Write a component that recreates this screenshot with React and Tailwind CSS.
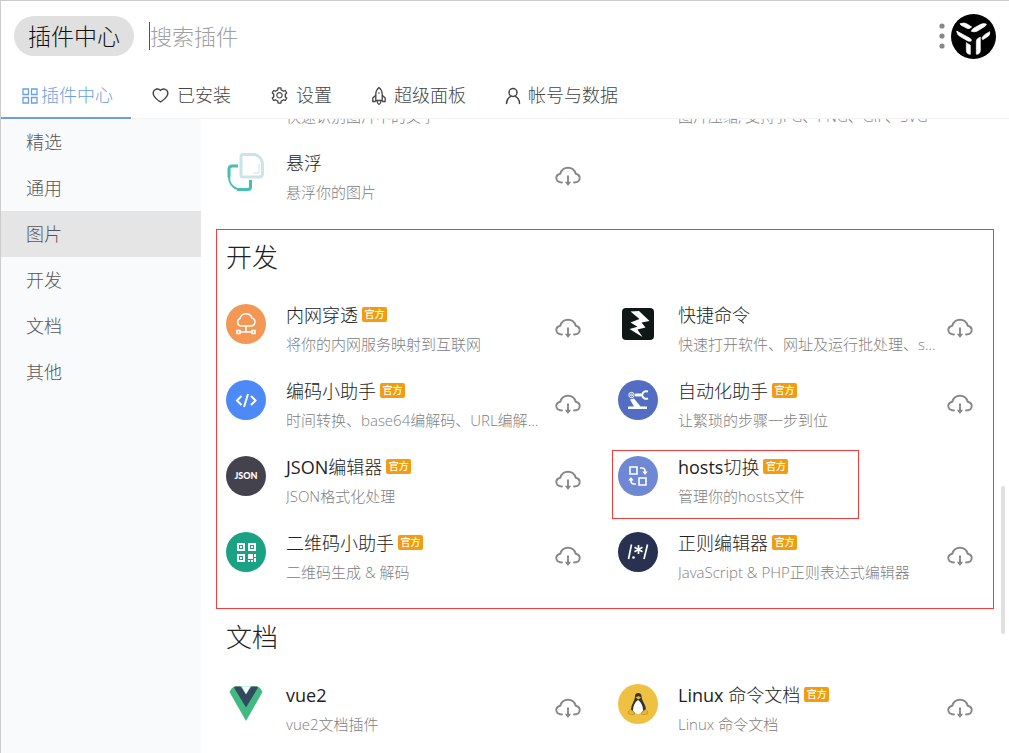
import { AiOutlineHeart, AiOutlineSetting } from 'react-icons/ai';

const GridIcon = () => (
    <svg width="16" height="16" viewBox="0 0 16 16" fill="none" stroke="currentColor" strokeWidth="1.3">
        <path d="M1 1h5.500v5.500H1zM9.500 1H15v5.500H9.500zM1 9.500h5.500V15H1zM9.500 9.500H15V15H9.500z" />
    </svg>
);

const RocketIcon = () => (
    <svg width="16" height="20" viewBox="0 0 16 20" fill="none" stroke="currentColor" strokeWidth="1.3">
        <path d="M8 1.500C5.500 3.500 4.800 5.500 4.800 8v6.500h6.400V8c0-2.500-.7-4.500-3.200-6.500z" strokeLinejoin="round" />
        <path d="M4.800 9.200L1.800 12v3.500h3M11.200 9.200l3 2.800v3.500h-3M6 14.500c0 2 .7 3.200 2 3.900 1.300-.7 2-1.900 2-3.900" strokeLinejoin="round" />
        <circle cx="8" cy="7" r="0.800" fill="currentColor" stroke="none" />
    </svg>
);

const UserIcon = () => (
    <svg width="16" height="18" viewBox="0 0 16 18" fill="none" stroke="currentColor" strokeWidth="1.5" strokeLinecap="round">
        <circle cx="8" cy="5.500" r="4" />
        <path d="M1.500 16.500c0-3.800 2-6 4.500-7.300M14.500 16.500c0-3.800-2-6-4.500-7.300" />
    </svg>
);

const CloudDownload = () => (
    <svg width="26" height="20" viewBox="0 0 26 20" fill="none" stroke="#888888" strokeWidth="1.900">
        <path d="M7 16.500C3.500 16.500 1.300 14.600 1.300 12 1.300 9.700 3 8.200 5.300 7.700 6.300 4.200 9.300 1.700 13 1.700s6.700 2.500 7.700 6c2.300.5 4 2 4 4.300 0 2.600-2.200 4.500-5.700 4.500" strokeLinecap="round" />
        <path d="M13 9.500v7" />
        <path d="M9.800 15.800h6.400L13 20z" fill="#888888" stroke="none" />
    </svg>
);

const Logo = () => (
    <svg width="45" height="45" viewBox="0 0 135 135">
        <circle cx="67.500" cy="67.500" r="67.500" fill="#000" />
        <g fill="#fff" stroke="#fff" strokeWidth="2" strokeLinejoin="round">
            <path d="M27 29q13-5 23 2l12 8q-7 7-14 4l-15-8q-6-3-6-6z" />
            <path d="M61 52q1-6 8-10l20-11q9-4 17-1 1 4-6 8L81 50q-10 6-20 2z" />
            <path d="M17 51l40 22q5 3 4 8-6 2-12-1L25 66q-7-4-8-15z" />
            <path d="M116 53q3 9-6 15L95 77q-4-4 0-9l9-8z" />
            <path d="M46 86l12 8v27q-12 0-12-13z" />
            <path d="M76 82q0-7 7-10l5-3v39q0 13-12 13z" />
        </g>
    </svg>
);

const FloatIcon = () => (
    <svg width="40" height="40" viewBox="0 0 40 40" fill="none">
        <path d="M12 14H6a3 3 0 0 0-3 3v8M11 37.500h11a2.500 2.500 0 0 0 2.500-2.500v-7" stroke="#45bfae" strokeWidth="3" />
        <path d="M3 17v8c0 5 3 10 8 12" stroke="#45bfae" strokeWidth="2" />
        <path d="M17 2.500h12c4 1 7 5 7.500 9V22a3 3 0 0 1-3 3H17a2 2 0 0 1-2-2V4.500a2 2 0 0 1 2-2z" stroke="#cbe4e6" strokeWidth="3" />
        <path d="M33 12v9h-6" stroke="#cbe4e6" strokeWidth="1" />
    </svg>
);

const TunnelIcon = () => (
    <svg width="40" height="40" viewBox="0 0 40 40" fill="none" stroke="#fff" strokeWidth="1.5">
        <circle cx="20" cy="20" r="20" fill="#f39755" stroke="none" />
        <path d="M14.500 22a4 4 0 0 1-.5-7.500 6.300 6.300 0 0 1 12-.500 4.100 4.100 0 0 1-.5 8z" />
        <path d="M20 22v5.500M14 28h12" />
        <path d="M11 26.500h3v3h-3zM26 26.500h3v3h-3z" />
    </svg>
);

const CodeIcon = () => (
    <svg width="40" height="40" viewBox="0 0 40 40" fill="none" stroke="#fff" strokeWidth="2">
        <circle cx="20" cy="20" r="20" fill="#4d8af8" stroke="none" />
        <path d="M15.500 16l-4.500 4.500 4.500 4.500M25 16l4.500 4.500L25 25M22 14l-4 13" />
    </svg>
);

const JsonIcon = () => (
    <svg width="40" height="40" viewBox="0 0 40 40">
        <circle cx="20" cy="20" r="20" fill="#44424d" />
        <text x="20" y="23" fill="#fff" fontFamily="Lato, sans-serif" fontWeight="900" fontSize="9" textAnchor="middle">JSON</text>
    </svg>
);

const QrIcon = () => (
    <svg width="40" height="40" viewBox="0 0 40 40" fill="none" stroke="#fff" strokeWidth="2">
        <circle cx="20" cy="20" r="20" fill="#1ba284" stroke="none" />
        <path d="M12 12h6v6h-6zM23 12h6v6h-6zM12 23h6v6h-6z" />
        <path d="M14 14h2v2h-2zM25 14h2v2h-2zM14 25h2v2h-2zM22 22h5v5h-5zM28 22h2v3h-2zM22 28h2v2h-2zM25 28h2v2h-2zM28 26h2v4h-2z" fill="#fff" stroke="none" />
    </svg>
);

const BoltIcon = () => (
    <svg width="40" height="40" viewBox="0 0 40 40">
        <rect x="4" y="4" width="32" height="32" rx="4" fill="#101817" />
        <path d="M12.500 7.500L21 7l10.500 10-8 1.500 4 5-8 2 5 7.500L11.500 25l8-2.200-7-4.300 9-3.500z" fill="#fff" />
    </svg>
);

const RobotIcon = () => (
    <svg width="40" height="40" viewBox="0 0 40 40" fill="none" stroke="#fff">
        <circle cx="20" cy="20" r="20" fill="#526dc2" stroke="none" />
        <circle cx="13.500" cy="15" r="2.700" />
        <circle cx="13.500" cy="15" r="1" />
        <path d="M17.500 14h6v2h-6z" fill="#fff" />
        <path d="M30 11.500c-3-1-5 0-6 3.500 1 3.500 3 4.500 6 3.500" strokeWidth="2" />
        <path d="M12 19.500l4-1 6.500 8H29v2.500H10v-2.500h6z" fill="#fff" stroke="none" />
    </svg>
);

const HostsIcon = () => (
    <svg width="40" height="40" viewBox="0 0 40 40" fill="none" stroke="#fff" strokeWidth="1.600">
        <circle cx="20" cy="20" r="20" fill="#6e88d4" stroke="none" />
        <path d="M12 11h7v7h-7zM21 22h7v7h-7z" />
        <path d="M22 12h2q3 0 3 3v2.500M18 28h-2q-3 0-3-3v-2.500" />
        <path d="M24.300 15.500h5.400L27 19zM10.300 24.500h5.400L13 21z" fill="#fff" stroke="none" />
    </svg>
);

const RegexIcon = () => (
    <svg width="40" height="40" viewBox="0 0 40 40" fill="none" stroke="#fff" strokeWidth="1.700">
        <circle cx="20" cy="20" r="20" fill="#283150" stroke="none" />
        <path d="M13.500 12.500l-3 14.500M29.500 12.500L26 27M20.500 13v9M16.500 15.200l8 4.600M24.500 15.200l-8 4.600" />
        <circle cx="15.500" cy="25.500" r="1.300" fill="#fff" stroke="none" />
    </svg>
);

const VueIcon = () => (
    <svg width="40" height="40" viewBox="0 0 40 40">
        <path d="M8 2.500h24q3 2 4.500 5.500L20 37 3.500 8Q5 4.500 8 2.500z" fill="#42b883" />
        <path d="M9 2.500h5.500l5.500 8 5.500-8H31q1 1 .5 2L20 23.500 8.500 4.500q-.5-1 .5-2z" fill="#35495e" />
        <path d="M15.500 2.500h9L20 10z" fill="#fff" />
    </svg>
);

const LinuxIcon = () => (
    <svg width="40" height="40" viewBox="0 0 40 40">
        <circle cx="20" cy="20" r="20" fill="#efc143" />
        <path d="M17 12c0-4 6.500-4 6.500 0 0 5 4.500 8 4.500 14l-3 3h-9l-3-3c0-6 4-9 4-14z" fill="#333" />
        <path d="M20 16c3 2 5 6 5 10 0 5-10 5-10 0 0-4 2-8 5-10z" fill="#fff" />
        <path d="M17.500 13.500l3-1.500 2.500 1.500-2.500 2z" fill="#efb52c" />
        <path d="M12.500 25.500q3 1 4.500 4.500-3 1.500-7-.5 0-3 2.500-4zM27.500 25.500q-3 1-4.500 4.500 3 1.500 7-.5 0-3-2.500-4z" fill="#efb52c" stroke="#ad852a" strokeWidth="0.600" />
    </svg>
);

const tabs = [
    { label: '已安装', icon: <AiOutlineHeart size={19} /> },
    { label: '设置', icon: <AiOutlineSetting size={19} /> },
    { label: '超级面板', icon: <RocketIcon /> },
    { label: '帐号与数据', icon: <UserIcon /> },
];

const categories = ['精选', '通用', '图片', '开发', '文档', '其他'];

const imagePlugins = [
    { desc: '快速识别图片中的文字' },
    { desc: '图片压缩, 支持 JPG、PNG、GIF、SVG' },
    { name: '悬浮', desc: '悬浮你的图片', icon: FloatIcon },
];

const devPlugins = [
    { name: '内网穿透', desc: '将你的内网服务映射到互联网', icon: TunnelIcon, official: true },
    { name: '快捷命令', desc: '快速打开软件、网址及运行批处理、shell 脚本', icon: BoltIcon },
    { name: '编码小助手', desc: '时间转换、base64编解码、URL编解码、哈希', icon: CodeIcon, official: true },
    { name: '自动化助手', desc: '让繁琐的步骤一步到位', icon: RobotIcon, official: true },
    { name: 'JSON编辑器', desc: 'JSON格式化处理', icon: JsonIcon, official: true },
    { name: 'hosts切换', desc: '管理你的hosts文件', icon: HostsIcon, official: true, installed: true, marked: true },
    { name: '二维码小助手', desc: '二维码生成 & 解码', icon: QrIcon, official: true },
    { name: '正则编辑器', desc: 'JavaScript & PHP正则表达式编辑器', icon: RegexIcon, official: true },
];

const docPlugins = [
    { name: 'vue2', desc: 'vue2文档插件', icon: VueIcon },
    { name: 'Linux 命令文档', desc: 'Linux 命令文档', icon: LinuxIcon, official: true },
];

// latin letters in a name are drawn heavier than the chinese ones
const PluginName = ({ name = '' }) => (
    <h3 className="text-[18px] leading-[26px] font-light whitespace-nowrap text-[#222222]">
        {name.split(/([A-Za-z0-9]+)/).map((part, i) =>
            i % 2 ? <span key={i} className="font-normal">{part}</span> : part
        )}
    </h3>
);

const PluginItem = ({ plugin }) => (
    <li className="relative flex h-16 items-center">
        <div className="mt-2 h-10 w-10 shrink-0 self-start">
            {plugin.icon && <plugin.icon />}
        </div>
        <div className="mr-2 ml-5 min-w-0 flex-1 self-end">
            <div className="flex h-[26px] items-center gap-1">
                <PluginName name={plugin.name} />
                {plugin.official && (
                    <span className="mb-[2px] h-[15px] w-[25px] rounded-xs bg-[#f39c12] text-center text-[10px] leading-[15px] font-medium text-white">官方</span>
                )}
            </div>
            <p className="truncate text-[15px] leading-8 font-light text-[#808080]">{plugin.desc}</p>
        </div>
        {plugin.installed ? (
            <div className="w-[26px]" />
        ) : (
            <button aria-label="下载" className="shrink-0">
                <CloudDownload />
            </button>
        )}
        {plugin.marked && (
            <div className="pointer-events-none absolute top-[2px] -left-[6px] h-[69px] w-[247px] border border-[#f23c3c]" />
        )}
    </li>
);

const Section = ({ title, plugins, marked }) => (
    <section className={`border pr-5 pb-2 pl-[9px] ${marked ? 'border-[#f23c3c]' : 'border-transparent'}`}>
        {title && <h2 className="h-[66px] text-[26px] leading-[54px] font-light text-[#222222]">{title}</h2>}
        <ul className="grid grid-cols-2 gap-x-[37px] gap-y-3 pb-3">
            {plugins.map((plugin) => (
                <PluginItem key={plugin.desc} plugin={plugin} />
            ))}
        </ul>
    </section>
);

const App = () => (
    <div className="flex h-screen flex-col overflow-hidden border-t border-l border-[#cccccc] bg-white font-['Open_Sans','Noto_Sans_CJK_SC',sans-serif] font-light">
        <header className="flex h-[70px] shrink-0 items-center px-[13px]">
            <span className="flex h-10 w-[120px] shrink-0 items-center justify-center rounded-full bg-[#e0e0e0] text-[23px] text-[#111111]">
                插件中心
            </span>
            <span className="ml-[15px] h-7 w-px bg-[#555555]" />
            <input
                type="text"
                aria-label="搜索插件"
                placeholder="搜索插件"
                className="h-10 min-w-0 flex-1 bg-transparent text-[22px] outline-none placeholder:text-[#a0a0a0]"
            />
            <button aria-label="更多" className="mr-[6px]">
                <svg width="6" height="26" viewBox="0 0 6 26" fill="#888888">
                    <circle cx="3" cy="3" r="2.600" />
                    <circle cx="3" cy="13" r="2.600" />
                    <circle cx="3" cy="23" r="2.600" />
                </svg>
            </button>
            <Logo />
        </header>

        <nav className="flex h-12 shrink-0 border-b border-[#f2f2f2] text-[18px] text-[#444444]">
            <button className="-mb-px flex w-[130px] items-center justify-center gap-[3px] border-b-2 border-[#6a9fe2] pt-[3px] pl-[3px] text-[#6a9fe2]">
                <GridIcon />
                插件中心
            </button>
            {tabs.map((tab) => (
                <button key={tab.label} className="flex items-center gap-[7px] pt-[2px] pr-[19px] pl-5">
                    {tab.icon}
                    {tab.label}
                </button>
            ))}
        </nav>

        <div className="relative flex min-h-0 flex-1">
            <aside className="w-[200px] shrink-0 bg-[#f9fafc]">
                {categories.map((name) => (
                    <button
                        key={name}
                        className={`block h-[46px] w-full pl-[25px] text-left text-[18px] text-[#555555] ${name === '图片' ? 'bg-[#e5e5e5]' : ''}`}
                    >
                        {name}
                    </button>
                ))}
            </aside>
            <main className="min-w-0 flex-1 overflow-hidden px-[15px]">
                <div className="-mt-[52px]">
                    <Section plugins={imagePlugins} />
                    <Section title="开发" plugins={devPlugins} marked />
                    <Section title="文档" plugins={docPlugins} />
                </div>
            </main>
            <div className="absolute top-[367px] right-1 h-[148px] w-1 rounded-full bg-[#e0e0e0]" />
        </div>
    </div>
);

export default App;
